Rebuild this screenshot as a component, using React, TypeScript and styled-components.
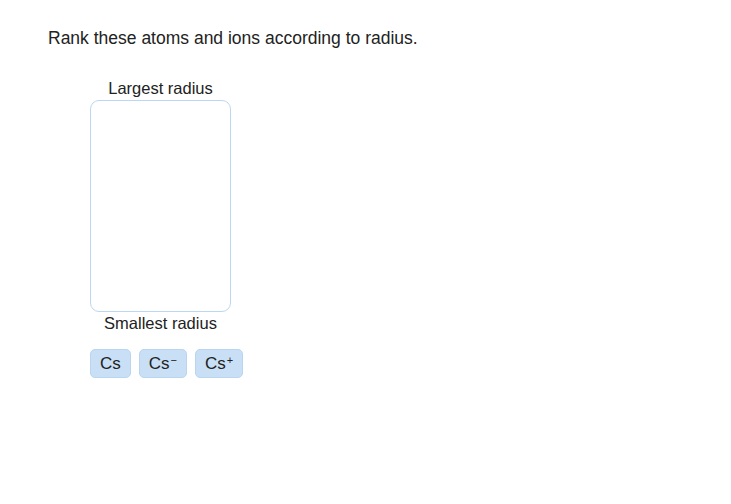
import styled, { createGlobalStyle } from "styled-components";

const GlobalStyle = createGlobalStyle`
  html, body {
    margin: 0;
    padding: 0;
    background: #fff;
  }
  body {
    font-family: "Liberation Sans", Arial, sans-serif;
    color: #222;
  }
`;

const Page = styled.div`
  padding: 28px 0 0 48px;
`;

const Prompt = styled.p`
  margin: 0;
  font-size: 17.5px;
  line-height: 20px;
`;

const Ranker = styled.div`
  margin: 31px 0 0 42px;
  width: 141px;
  display: flex;
  flex-direction: column;
  align-items: center;
`;

const EndLabel = styled.div`
  font-size: 16.5px;
  line-height: 18px;
  white-space: nowrap;
`;

const DropZone = styled.div`
  box-sizing: border-box;
  width: 141px;
  height: 212px;
  margin: 3px 0 2px;
  border: 1.5px solid #bcd7f3;
  border-radius: 9px;
`;

const Tray = styled.div`
  display: flex;
  gap: 8px;
  margin: 17px 0 0 42px;
`;

const Chip = styled.div`
  box-sizing: border-box;
  height: 29px;
  padding: 0 9px;
  display: flex;
  align-items: center;
  background: #c8dff5;
  border: 1px solid #b9d5f0;
  border-radius: 5px;
  font-size: 17px;
  color: #222;

  sup {
    font-size: 11px;
    line-height: 0;
    position: relative;
    top: -4px;
    margin-left: 1px;
  }
`;

const items = [
  { label: "Cs", charge: "" },
  { label: "Cs", charge: "\u2212" },
  { label: "Cs", charge: "+" },
];

export default function App() {
  return (
    <>
      <GlobalStyle />
      <Page>
        <Prompt>Rank these atoms and ions according to radius.</Prompt>
        <Ranker>
          <EndLabel>Largest radius</EndLabel>
          <DropZone />
          <EndLabel>Smallest radius</EndLabel>
        </Ranker>
        <Tray>
          {items.map((it, i) => (
            <Chip key={i}>
              {it.label}
              {it.charge && <sup>{it.charge}</sup>}
            </Chip>
          ))}
        </Tray>
      </Page>
    </>
  );
}
